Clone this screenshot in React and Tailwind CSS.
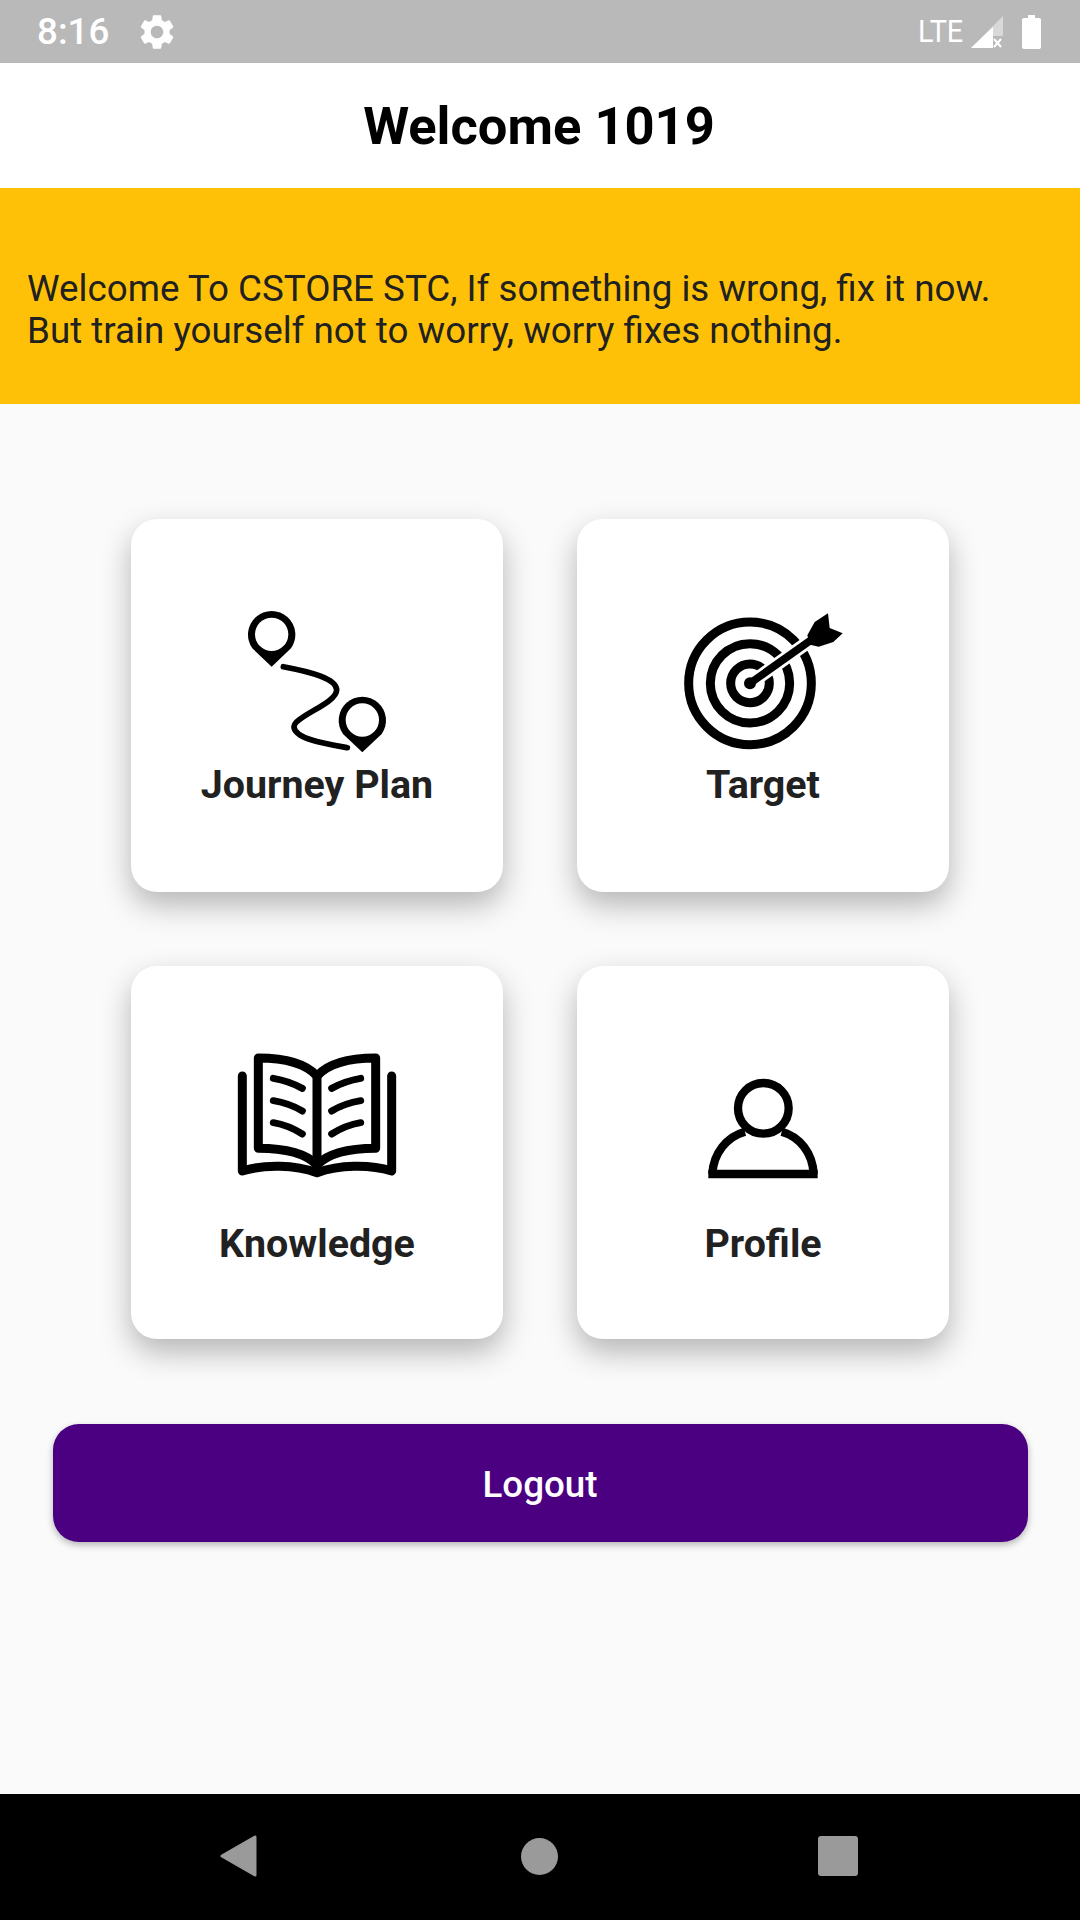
import { MdSettings } from 'react-icons/md';

const JourneyIcon = () => (
  <svg width="160" height="145" viewBox="51 60 480 435">
    <path d="M155 230 L97 175 A71 71 0 1 1 213 175 Z" fill="#000" />
    <circle cx="155" cy="133" r="50" fill="#fff" />
    <path d="M427 487 L369 432 A71 71 0 1 1 485 432 Z" fill="#000" />
    <circle cx="427" cy="390" r="50" fill="#fff" />
    <path d="M190 230 C270 245 350 265 350 300 C350 340 222 380 222 410 C222 445 310 460 382 473" fill="none" stroke="#000" strokeWidth="17" strokeLinecap="round" />
  </svg>
);

const TargetIcon = () => (
  <svg width="166" height="145" viewBox="30 30 498 435">
    <circle cx="240" cy="250" r="184" fill="none" stroke="#000" strokeWidth="27" />
    <circle cx="240" cy="250" r="119" fill="none" stroke="#000" strokeWidth="27" />
    <circle cx="240" cy="250" r="58" fill="none" stroke="#000" strokeWidth="27" />
    <path d="M270 229 L430 115" stroke="#fff" strokeWidth="40" />
    <circle cx="240" cy="250" r="18" fill="#000" />
    <path d="M240 250 L430 115" stroke="#000" strokeWidth="23" />
    <path d="M412 106 L434 66 L474 40 L479 84 L518 100 L490 126 L446 140 L420 134 Z" fill="#000" />
  </svg>
);

const BookIcon = () => (
  <svg width="166" height="130" viewBox="27 30 498 390" fill="none" stroke="#000" strokeWidth="27" strokeLinejoin="round" strokeLinecap="round">
    <path d="M276 108 C240 68 180 54 100 54 L100 325 C170 325 240 338 276 375 C312 338 382 325 452 325 L452 54 C372 54 312 68 276 108 Z" />
    <path d="M276 108 L276 395" />
    <path d="M52 108 L52 393 C120 372 210 375 276 398 C342 375 432 372 500 393 L500 108" />
    <path d="M145 115 C175 120 205 130 232 145 M145 182 C175 187 205 197 232 213 M145 248 C175 253 205 265 232 282" strokeWidth="21" />
    <path d="M407 115 C377 120 347 130 320 145 M407 182 C377 187 347 197 320 213 M407 248 C377 253 347 265 320 282" strokeWidth="21" />
  </svg>
);

const ProfileIcon = () => (
  <svg width="120" height="104" viewBox="39 45 360 312" fill="none" stroke="#000" strokeWidth="25">
    <circle cx="220" cy="145" r="76" />
    <path d="M67 342 C70 280 110 230 165 215 M275 215 C330 230 368 280 371 342" />
    <path d="M55 342 H383" />
  </svg>
);

function Card({ Icon, title, top, gap }) {
  return (
    <div className={`w-[372px] h-[373px] flex flex-col items-center bg-white rounded-[26px] shadow-[0_13px_30px_rgba(0,0,0,0.28)] ${top}`}>
      <Icon />
      <span className={`text-[39.4px] leading-[44px] font-bold text-[#212121] ${gap}`}>{title}</span>
    </div>
  );
}

export default function App() {
  return (
    <div className="w-[1080px] h-[1920px] flex flex-col bg-[#fafafa] font-['Roboto',sans-serif]">
      {/* status bar */}
      <div className="h-[63px] shrink-0 flex items-center bg-[#b9b9b9] pl-[37px] pr-[39px] text-white">
        <span className="text-[36.75px] leading-[63px] font-medium">8:16</span>
        <MdSettings className="ml-[27px] w-[42px] h-[42px]" />
        <span className="ml-auto text-[32px] leading-[63px] scale-x-[0.9] origin-right">LTE</span>
        <svg width="32" height="32" viewBox="0 0 32 32" className="ml-[8px]">
          <path d="M32 0 V32 H0 Z" fill="#d9d9d9" />
          <path d="M22 11 V32 H0 Z" fill="#fff" />
          <path d="M22 20 H32 V32 H22 Z" fill="#b9b9b9" />
          <path d="M23 23 L30 31 M30 23 L23 31" stroke="#fff" strokeWidth="2" />
        </svg>
        <svg width="19" height="34" viewBox="0 0 19 34" className="ml-[19px]">
          <path d="M6 0 H13 V3 H17 A2 2 0 0 1 19 5 V32 A2 2 0 0 1 17 34 H2 A2 2 0 0 1 0 32 V5 A2 2 0 0 1 2 3 H6 Z" fill="#fff" />
        </svg>
      </div>

      {/* title */}
      <div className="h-[125px] shrink-0 flex items-center justify-center bg-white pt-[2px] pr-[2px]">
        <h1 className="text-[52.5px] font-bold text-black">Welcome 1019</h1>
      </div>

      {/* banner */}
      <div className="h-[216px] shrink-0 flex items-center bg-[#ffc107] px-[27px] pt-[27px] text-[36.75px] leading-[42px] text-[#212121]">
        <p>Welcome To CSTORE STC, If something is wrong, fix it now.<br />But train yourself not to worry, worry fixes nothing.</p>
      </div>

      <main className="flex-1 flex flex-col">
        <div className="mt-[115px] mx-auto grid grid-cols-2 gap-x-[74px] gap-y-[74px]">
          <Card Icon={JourneyIcon} title="Journey Plan" top="pt-[91px]" gap="mt-[8px]" />
          <Card Icon={TargetIcon} title="Target" top="pt-[91px]" gap="mt-[8px]" />
          <Card Icon={BookIcon} title="Knowledge" top="pt-[84px]" gap="mt-[42px]" />
          <Card Icon={ProfileIcon} title="Profile" top="pt-[109px]" gap="mt-[43px]" />
        </div>
        <button className="mt-[85px] mx-[52.5px] h-[118px] pt-[3px] rounded-[26px] bg-[#4b0082] text-white text-[36.75px] font-medium shadow-[0_3px_7px_rgba(0,0,0,0.28)]">
          Logout
        </button>
      </main>

      {/* nav bar */}
      <div className="h-[126px] shrink-0 flex items-center bg-black pl-[220px] pb-[2px]">
        <svg width="37" height="42" viewBox="0 0 37 42">
          <path d="M35 2 V40 L2 21 Z" fill="#9a9a9a" stroke="#9a9a9a" strokeWidth="3" strokeLinejoin="round" />
        </svg>
        <div className="ml-[264px] w-[37px] h-[37px] rounded-full bg-[#9a9a9a]" />
        <div className="ml-[260px] w-[40px] h-[40px] rounded-[3px] bg-[#9a9a9a]" />
      </div>
    </div>
  );
}
